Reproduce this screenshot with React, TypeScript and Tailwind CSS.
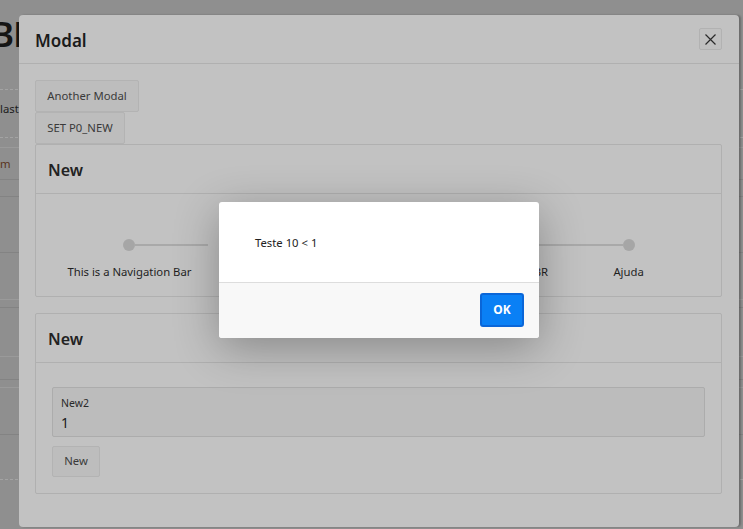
import React from "react";

const font = { fontFamily: '"Noto Sans", "Open Sans", sans-serif' };

type Step = {
  label: string;
  left: "none" | "full" | "short";
  right: "none" | "full";
};

const steps: Step[] = [
  { label: "This is a Navigation Bar", left: "none", right: "full" },
  { label: "Cadastro", left: "short", right: "full" },
  { label: "Consulta", left: "full", right: "full" },
  { label: "Português PT-BR", left: "full", right: "full" },
  { label: "Ajuda", left: "full", right: "none" },
];

// rows of the page that sits behind the modal (only the edges show)
const pageRows = [
  { h: "h-[90px]", border: "border-b border-dashed border-[#a3a3a3]", text: "" },
  { h: "h-[48px]", border: "border-b border-dashed border-[#a3a3a3]", text: "lastro" },
  { h: "h-[10px]", border: "border-b border-[#9a9a9a]", text: "" },
  { h: "h-[32px]", border: "border-b border-[#838383]", text: "m" },
  { h: "h-[17px]", border: "border-b border-[#838383]", text: "" },
  { h: "h-[56px]", border: "border-b border-[#838383]", text: "" },
  { h: "h-[47px]", border: "border-b border-[#9a9a9a]", text: "" },
  { h: "h-[8px]", border: "border-b border-[#838383]", text: "" },
  { h: "h-[49px]", border: "border-b border-[#9a9a9a]", text: "" },
  { h: "h-[23px]", border: "border-b border-[#838383]", text: "" },
  { h: "h-[8px]", border: "border-b border-[#9a9a9a]", text: "" },
  { h: "h-[47px]", border: "border-b border-[#838383]", text: "" },
  { h: "h-[45px]", border: "border-b border-dashed border-[#a3a3a3]", text: "" },
];

function CardHeader({ children }: { children: React.ReactNode }) {
  return (
    <div className="flex h-[49px] items-center border-b border-[#b0b0b0] px-3 pt-[2px]">
      <h2 className="text-[16px] font-semibold text-[#222222]">{children}</h2>
    </div>
  );
}

function Stepper() {
  return (
    <div className="ml-[31px] grid w-[624px] grid-cols-5">
      {steps.map((step) => (
        <div key={step.label} className="flex flex-col items-center">
          <div className="flex h-3 w-full items-center">
            <div className="flex flex-1 justify-start">
              {step.left === "full" && <div className="h-[2px] w-full bg-[#a9a9a9]" />}
              {step.left === "short" && <div className="h-[2px] w-[16px] bg-[#a9a9a9]" />}
            </div>
            <div className="h-3 w-3 rounded-full bg-[#a6a6a6]" />
            <div className="flex flex-1">
              {step.right === "full" && <div className="h-[2px] w-full bg-[#a9a9a9]" />}
            </div>
          </div>
          <span className="mt-[13px] whitespace-nowrap text-[11.3px] leading-4 text-[#1f1f1f]">
            {step.label}
          </span>
        </div>
      ))}
    </div>
  );
}

export default function App() {
  return (
    <div className="relative h-[529px] w-[743px] overflow-hidden bg-[#8f8f8f]" style={font}>
      {/* page behind the overlay */}
      <div className="flex flex-col">
        {pageRows.map((row, i) => (
          <div key={i} className={`relative ${row.h} ${row.border}`}>
            {i === 0 && (
              <span className="absolute left-[-9px] top-[16px] text-[35px] font-semibold leading-none tracking-[-1px] text-[#151515]">
                BE
              </span>
            )}
            {row.text === "lastro" && (
              <span className="absolute left-0 top-[11px] text-[11.3px] text-[#1d1d1d]">lastro</span>
            )}
            {row.text === "m" && (
              <span className="absolute left-0 top-[8px] text-[11.3px] text-[#5a3420]">m</span>
            )}
          </div>
        ))}
      </div>

      {/* modal */}
      <div className="absolute left-[19px] top-[15px] flex h-[512px] w-[720px] flex-col rounded-[4px] bg-[#c2c2c2] shadow-[2px_0_2px_rgba(0,0,0,0.25)]">
        <div className="flex h-[49px] items-center justify-between border-b border-[#b0b0b0] pl-4 pr-[17px]">
          <h1 className="pt-[4px] text-[17px] font-semibold text-[#1b1b1b]">Modal</h1>
          <button className="flex h-[22px] w-[23px] items-center justify-center rounded-[2px] border border-[#b2b2b2] bg-[#c0c0c0]">
            <svg width="11" height="11" viewBox="0 0 11 11">
              <path d="M0.5 0.5L10.5 10.5M10.5 0.5L0.5 10.5" stroke="#2a2a2a" strokeWidth="1.2" />
            </svg>
          </button>
        </div>

        <div className="flex flex-col items-start pl-4 pr-[17px] pt-4">
          <button className="h-8 w-[104px] rounded-[2px] border border-[#b3b3b3] bg-[#bdbdbd] text-[11.3px] text-[#3a3a3a]">
            Another Modal
          </button>
          <button className="h-8 w-[90px] rounded-[2px] border border-[#b3b3b3] bg-[#bdbdbd] text-[11.3px] text-[#3a3a3a]">
            SET P0_NEW
          </button>

          <section className="w-full rounded-[2px] border border-[#b0b0b0]">
            <CardHeader>New</CardHeader>
            <div className="h-[102px] pt-[45px]">
              <Stepper />
            </div>
          </section>

          <section className="mt-4 w-full rounded-[2px] border border-[#b0b0b0]">
            <CardHeader>New</CardHeader>
            <div className="px-4 pb-[16px] pt-[24px]">
              <div className="flex h-[50px] flex-col justify-center rounded-[2px] border border-[#acacac] bg-[#bcbcbc] pl-2 pt-[4px]">
                <span className="text-[10.5px] leading-4 text-[#2a2a2a]">New2</span>
                <span className="mt-[2px] text-[14px] leading-5 text-[#1a1a1a]">1</span>
              </div>
              <button className="mt-[9px] h-[31px] w-[48px] rounded-[2px] border border-[#b3b3b3] bg-[#bdbdbd] text-[11.3px] text-[#3a3a3a]">
                New
              </button>
            </div>
          </section>
        </div>
      </div>

      {/* alert dialog */}
      <div className="absolute left-[219px] top-[202px] flex h-[136px] w-[320px] flex-col overflow-hidden rounded-[3px] bg-white shadow-[0_10px_45px_rgba(0,0,0,0.3)]">
        <div className="flex h-[80px] items-center pl-9 pt-[3px]">
          <p className="text-[11.3px] text-[#222222]">Teste 10 &lt; 1</p>
        </div>
        <div className="flex flex-1 items-start justify-end border-t border-[#dddddd] bg-[#f8f8f8] pr-[15px] pt-[10px]">
          <button className="h-[34px] w-[44px] rounded-[3px] border-2 border-[#0a66d8] bg-[#0a80f5] text-[12px] font-bold text-white">
            OK
          </button>
        </div>
      </div>
    </div>
  );
}
